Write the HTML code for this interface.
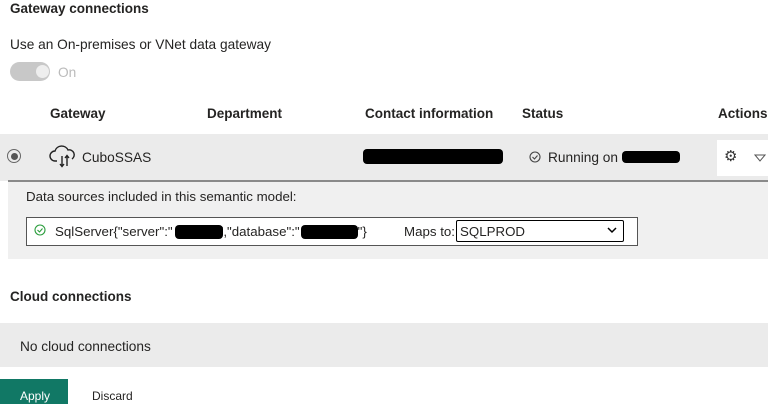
<!DOCTYPE html>
<html><head><style>
body{margin:0;width:768px;height:404px;overflow:hidden;background:#fff;font-family:"Liberation Sans",sans-serif;color:#252423;position:relative}
.a{position:absolute;white-space:nowrap}
.b{font-weight:bold;font-size:13.5px}
.t{font-size:13.7px}
.blk{position:absolute;background:#000;border-radius:4px}
</style></head><body>
<div class="a b" style="left:10px;top:1px">Gateway connections</div>
<div class="a t" style="left:10px;top:37px">Use an On-premises or VNet data gateway</div>
<div class="a" style="left:10px;top:62px;width:40px;height:19px;border-radius:10px;background:#c8c8c8"></div>
<div class="a" style="left:36px;top:65px;width:13px;height:13px;border-radius:50%;background:#eee"></div>
<div class="a t" style="left:58px;top:65px;color:#bbb">On</div>
<div class="a b" style="left:50px;top:106px">Gateway</div>
<div class="a b" style="left:207px;top:106px">Department</div>
<div class="a b" style="left:365px;top:106px">Contact information</div>
<div class="a b" style="left:522px;top:106px">Status</div>
<div class="a b" style="left:718px;top:106px">Actions</div>
<div class="a" style="left:0;top:134px;width:768px;height:47px;background:#ebebeb"></div>
<div class="a" style="left:7px;top:149px;width:12px;height:12px;border:1.5px solid #666;border-radius:50%"></div>
<div class="a" style="left:11px;top:153px;width:7px;height:7px;background:#555;border-radius:50%"></div>
<svg class="a" style="left:48px;top:144px" width="30" height="26" viewBox="0 0 30 26" fill="none" stroke="#222" stroke-width="1.4"><path d="M9 17H7a5 5 0 0 1 0-10 7 7 0 0 1 13-1 5 5 0 0 1 4 9"/><path d="M14 12v10M12 20l2 2.5 2-2.5M19 22V12M17 14l2-2.5 2 2.5"/></svg>
<div class="a t" style="left:82px;top:150px">CuboSSAS</div>
<div class="blk" style="left:363px;top:149px;width:140px;height:15px"></div>
<svg class="a" style="left:529px;top:151px" width="12" height="12" viewBox="0 0 12 12" fill="none" stroke="#444" stroke-width="1.1"><circle cx="6" cy="6" r="5"/><path d="M3.5 6l2 2 3-3.5"/></svg>
<div class="a t" style="left:548px;top:150px">Running on</div>
<div class="blk" style="left:622px;top:151px;width:58px;height:12px"></div>
<div class="a" style="left:717px;top:140px;width:51px;height:36px;background:#fff"></div>
<div class="a" style="left:724px;top:147px;font-size:15px;color:#333">⚙</div>
<svg class="a" style="left:754px;top:154px" width="12" height="8"><path d="M1 1h10L6 7z" fill="none" stroke="#555"/></svg>
<div class="a" style="left:8px;top:180px;width:760px;height:77px;background:#f0f0f0;border-top:2px solid #8a8a8a"></div>
<div class="a" style="left:26px;top:189px;font-size:13.3px">Data sources included in this semantic model:</div>
<div class="a" style="left:26px;top:217px;width:610px;height:27px;background:#fff;border:1px solid #555"></div>
<svg class="a" style="left:34px;top:224px" width="12" height="12" viewBox="0 0 12 12" fill="none" stroke="#2a9d3c" stroke-width="1.1"><circle cx="6" cy="6" r="5"/><path d="M3.5 6l2 2 3-3.5"/></svg>
<div class="a" style="left:55px;top:224px;font-size:13.3px">SqlServer{"server":"<span style="display:inline-block;width:46px"></span>","database":"<span style="display:inline-block;width:58px"></span>"}</div>
<div class="blk" style="left:175px;top:225px;width:48px;height:14px"></div>
<div class="blk" style="left:301px;top:225px;width:57px;height:14px"></div>
<div class="a" style="left:404px;top:224px;font-size:13.3px">Maps to:</div>
<div class="a" style="left:456px;top:220px;width:166px;height:20px;border:1px solid #000;border-radius:2px;background:#fff"></div>
<div class="a" style="left:460px;top:224px;font-size:13.3px">SQLPROD</div>
<svg class="a" style="left:607px;top:227px" width="10" height="7"><path d="M1 1l4 4 4-4" fill="none" stroke="#000" stroke-width="1.5"/></svg>
<div class="a b" style="left:10px;top:289px">Cloud connections</div>
<div class="a" style="left:0;top:323px;width:768px;height:44px;background:#ebebeb"></div>
<div class="a t" style="left:20px;top:339px">No cloud connections</div>
<div class="a" style="left:0;top:379px;width:68px;height:25px;background:#117865"></div>
<div class="a" style="left:20px;top:389px;font-size:12px;color:#fff">Apply</div>
<div class="a" style="left:92px;top:389px;font-size:12px">Discard</div>
</body></html>
